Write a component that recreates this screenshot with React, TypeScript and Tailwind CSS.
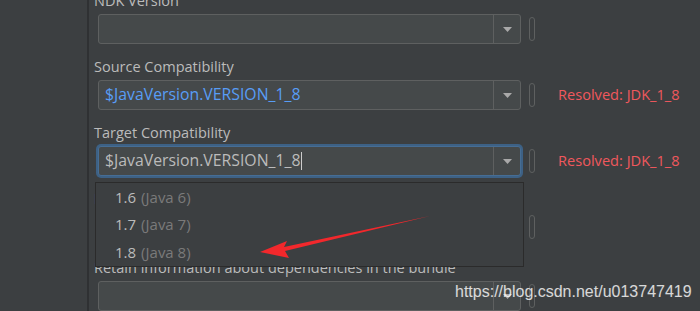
import React from "react";

const font = { fontFamily: '"Open Sans", "Noto Sans", sans-serif' };

function Combo({ value, focused, blue }: { value?: string; focused?: boolean; blue?: boolean }) {
  return (
    <div
      className={
        "relative flex h-[30px] w-[423px] items-stretch rounded-[3px] border bg-[#45494a] " +
        (focused ? "border-[#466d94] ring-2 ring-[#3d6185]" : "border-[#5e6060]")
      }
    >
      <div
        className={
          "flex flex-1 items-center pl-[6px] text-[15.8px] " + (blue ? "text-[#589df6]" : "text-[#bbbbbb]")
        }
      >
        {value}
        {focused && <span className="ml-[1px] inline-block h-[18px] w-px bg-[#cccccc]" />}
      </div>
      <div className="flex w-[27px] items-center justify-center border-l border-[#5e6060]">
        <svg width="9" height="5" viewBox="0 0 9 5">
          <path d="M0 0H9L4.5 5Z" fill="#a9a9a9" />
        </svg>
      </div>
    </div>
  );
}

function Row({
  label,
  value,
  focused,
  blue,
  resolved,
  extra,
}: {
  label: string;
  value?: string;
  focused?: boolean;
  blue?: boolean;
  resolved?: string;
  extra?: string;
}) {
  return (
    <div className={"flex flex-col " + (extra ?? "")}>
      <div className="h-[20px] text-[14.5px] leading-[20px] text-[#bbbbbb]">{label}</div>
      <div className="mt-[3px] flex items-center pl-[4px]">
        <Combo value={value} focused={focused} blue={blue} />
        <div className="ml-[8px] h-[24px] w-[6px] rounded-full border border-[#5e6060]" />
        {resolved && <div className="ml-[23px] text-[14.6px] text-[#f0585d]">{resolved}</div>}
      </div>
    </div>
  );
}

export default function App() {
  return (
    <div className="relative flex h-[311px] w-[700px] overflow-hidden bg-[#3c3f41]" style={font}>
      <div className="h-full w-[87px] bg-[#3c3f41]" />
      <div className="h-full w-[2px] bg-[#2f3133]" />
      <div className="flex flex-col gap-[13px] pl-[5px] pt-0 -mt-[9px]">
        <Row label="NDK Version" />
        <Row label="Source Compatibility" value="$JavaVersion.VERSION_1_8" blue resolved="Resolved: JDK_1_8" />
        <Row label="Target Compatibility" value="$JavaVersion.VERSION_1_8" focused resolved="Resolved: JDK_1_8" />
        <Row label="Incremental" />
        <Row label="Retain information about dependencies in the bundle" extra="mt-[3px]" />
      </div>

      <div className="absolute left-[95px] top-[182px] flex h-[85px] w-[429px] flex-col border border-[#2b2b2b] bg-[#3c3f41] text-[15px]">
        {[
          ["1.6", "(Java 6)"],
          ["1.7", "(Java 7)"],
          ["1.8", "(Java 8)"],
        ].map(([a, b]) => (
          <div key={a} className="flex h-[27.5px] items-center pl-[19px]">
            <span className="text-[#bbbbbb]">{a}</span>
            <span className="ml-[5px] text-[#7a7a7a]">{b}</span>
          </div>
        ))}
      </div>

      <svg className="absolute left-0 top-0" width="700" height="311" viewBox="0 0 700 311">
        <path d="M430 216 L284 247 L287 241 L260 252 L289 258 L285 251 Z" fill="#f2282c" />
      </svg>

      <div
        className="absolute left-[455px] top-[280px] text-[16px] text-white/80"
        style={{ fontFamily: '"Liberation Sans", Arial, sans-serif' }}
      >
        https://blog.csdn.net/u013747419
      </div>
    </div>
  );
}
